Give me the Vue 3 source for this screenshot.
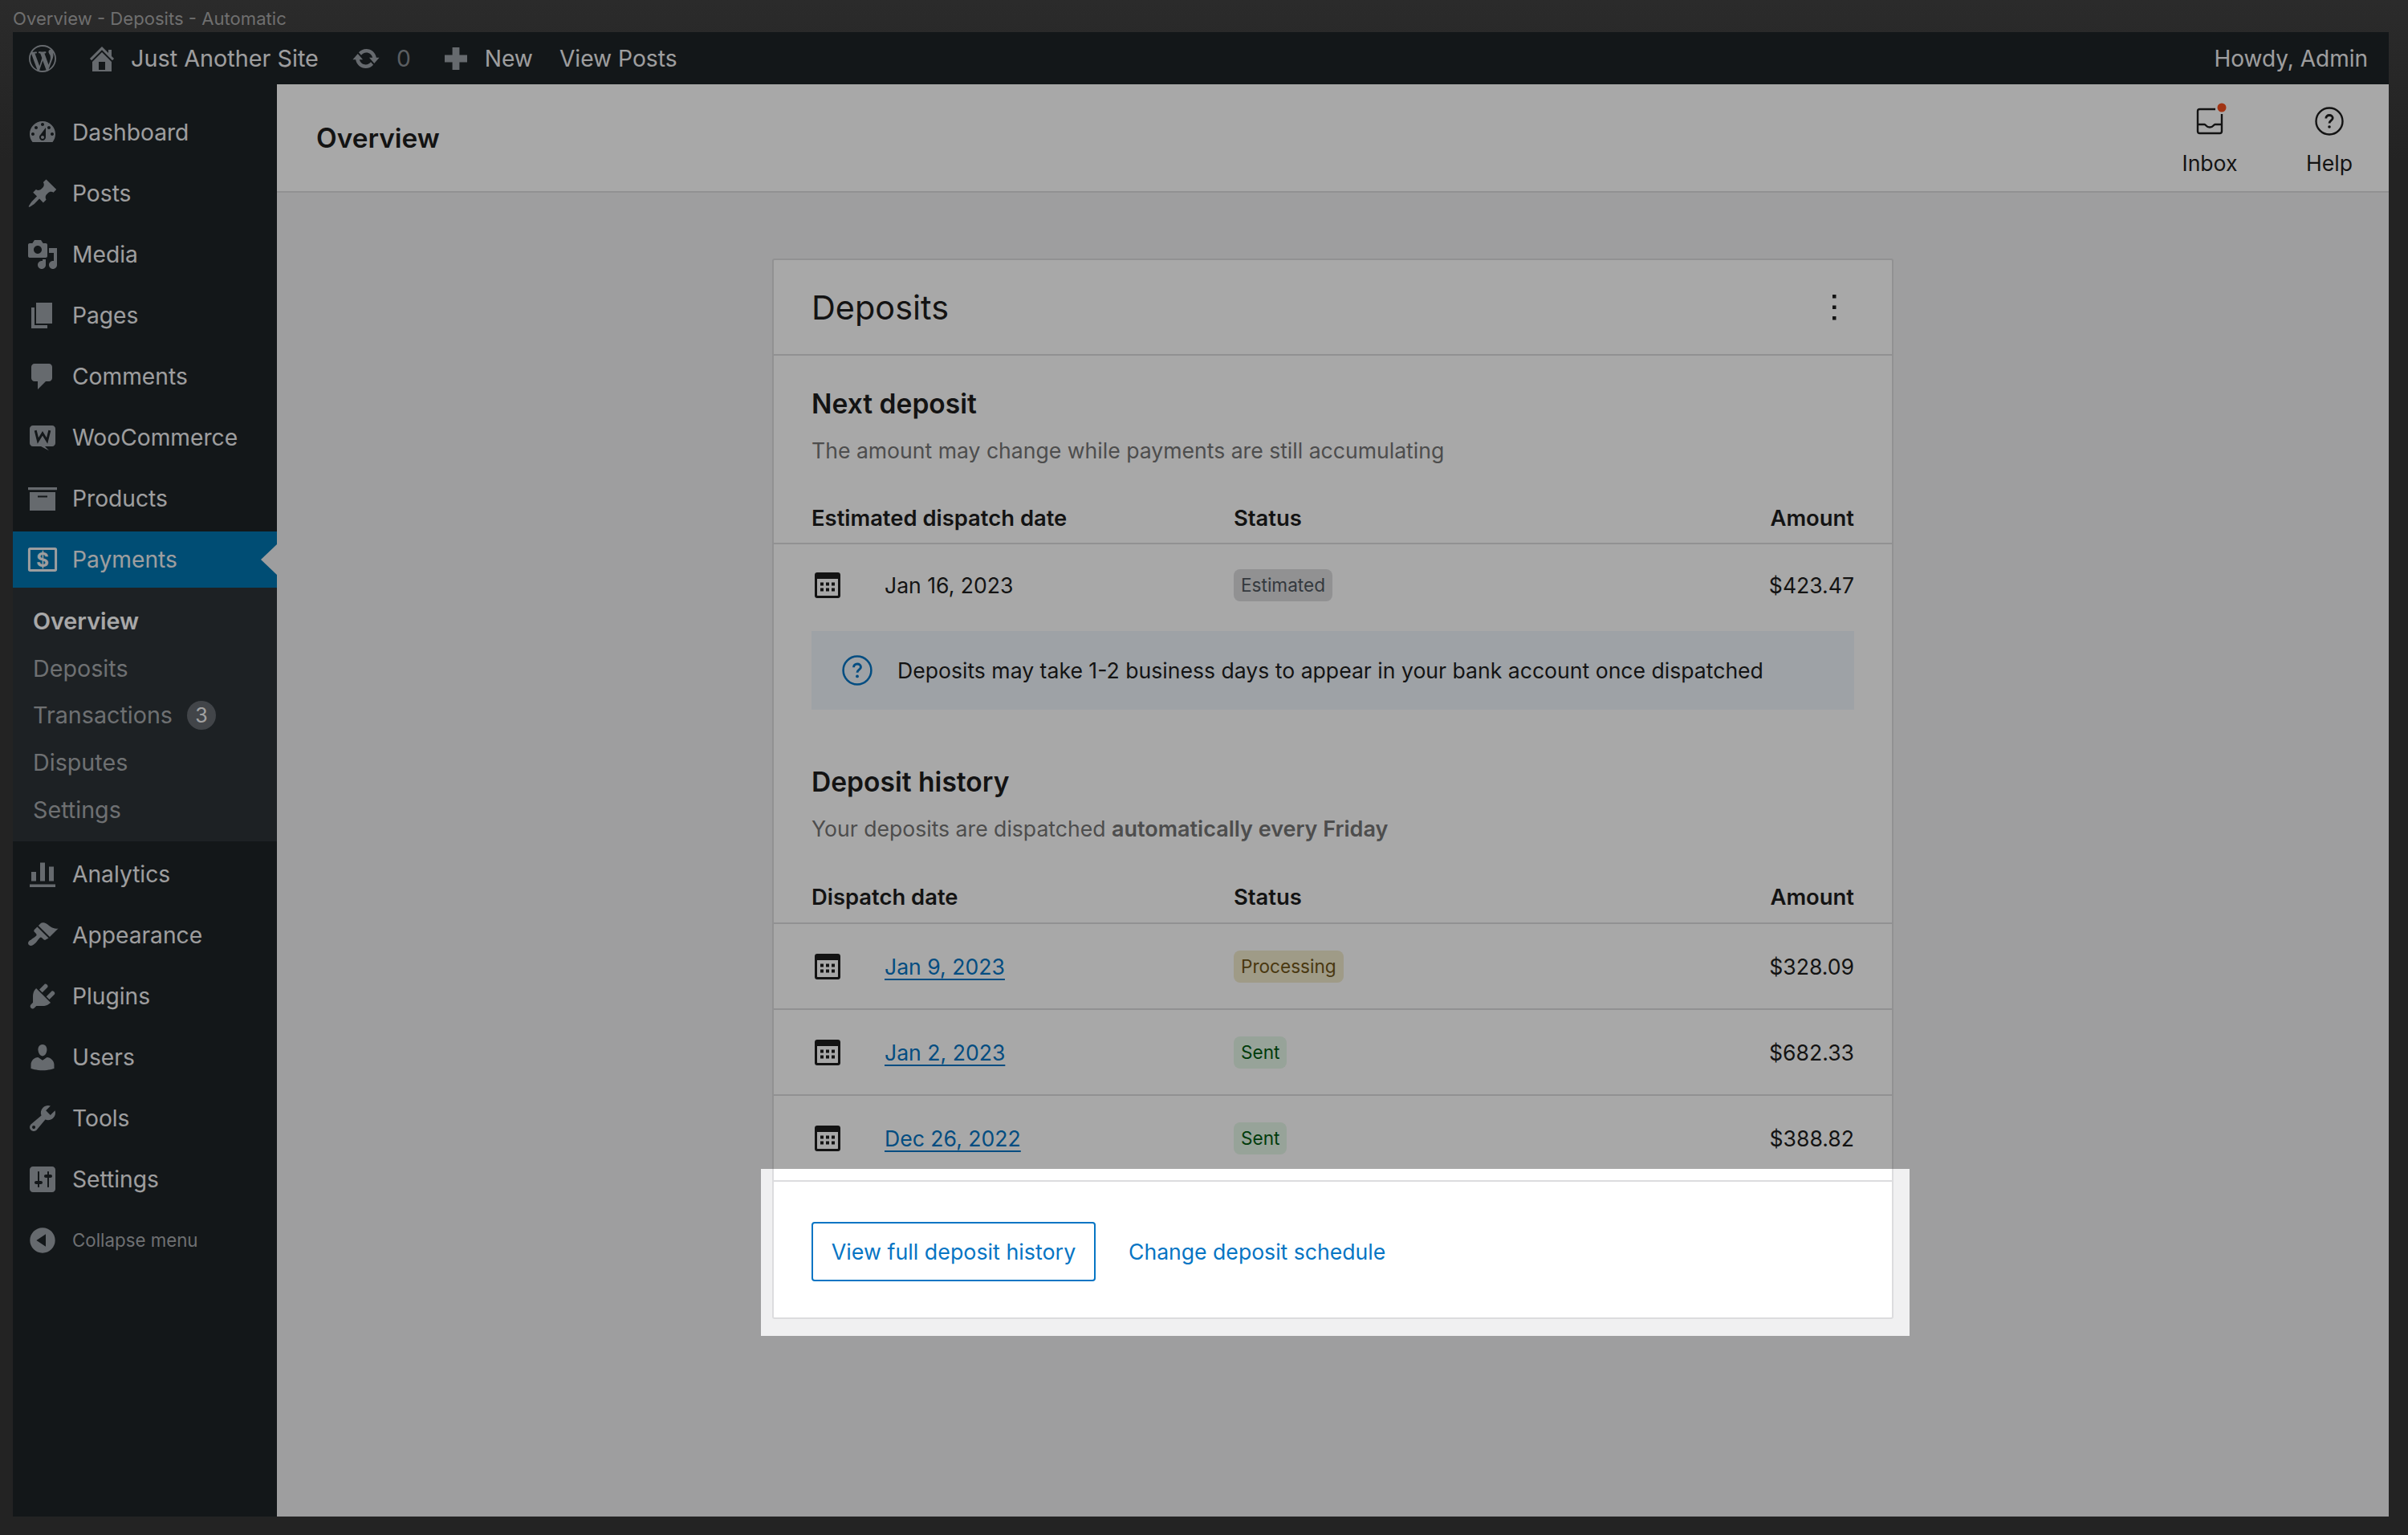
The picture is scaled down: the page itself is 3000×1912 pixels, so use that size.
<script setup>
const dash = {
  dashboard: 'M3.76 16h12.48c1.1-1.37 1.76-3.11 1.76-5 0-4.42-3.58-8-8-8s-8 3.58-8 8c0 1.89.66 3.63 1.76 5zM10 4c.55 0 1 .45 1 1s-.45 1-1 1-1-.45-1-1 .45-1 1-1zM6 6c.55 0 1 .45 1 1s-.45 1-1 1-1-.45-1-1 .45-1 1-1zm8 0c.55 0 1 .45 1 1s-.45 1-1 1-1-.45-1-1 .45-1 1-1zm-5.37 5.55L12 7v6c0 1.1-.9 2-2 2s-2-.9-2-2c0-.57.24-1.08.63-1.45zM4 10c.55 0 1 .45 1 1s-.45 1-1 1-1-.45-1-1 .45-1 1-1zm12 0c.55 0 1 .45 1 1s-.45 1-1 1-1-.45-1-1 .45-1 1-1zm-5 3c0-.55-.45-1-1-1s-1 .45-1 1 .45 1 1 1 1-.45 1-1z',
  posts: 'M10.44 3.02l1.82-1.82 6.36 6.35-1.83 1.82c-1.05-.68-2.48-.57-3.41.36l-.75.75c-.92.93-1.04 2.35-.35 3.41l-1.83 1.82-2.41-2.41-2.8 2.79c-.42.42-3.38 2.71-3.8 2.29s1.86-3.39 2.28-3.81l2.79-2.79L4.1 9.36l1.83-1.82c1.05.69 2.48.57 3.4-.36l.75-.75c.93-.92 1.05-2.35.36-3.41z',
  media: 'M13 11V4c0-.55-.45-1-1-1h-1.67L9 1H5L3.67 3H2c-.55 0-1 .45-1 1v7c0 .55.45 1 1 1h10c.55 0 1-.45 1-1zM7 4.5c1.38 0 2.5 1.12 2.5 2.5S8.38 9.5 7 9.5 4.5 8.38 4.5 7 5.62 4.5 7 4.5zM14 6h5v10.5c0 1.38-1.12 2.5-2.5 2.5S14 17.88 14 16.5s1.12-2.5 2.5-2.5c.17 0 .34.02.5.05V9h-3V6zm-4 8.05V13h2v3.5c0 1.38-1.12 2.5-2.5 2.5S7 17.88 7 16.5 8.12 14 9.5 14c.17 0 .34.02.5.05z',
  pages: 'M6 15V2h10v13H6zm-1 1h8v2H3V5h2v11z',
  comments: 'M5 2h9c1.1 0 2 .9 2 2v7c0 1.1-.9 2-2 2h-2l-5 5v-5H5c-1.1 0-2-.9-2-2V4c0-1.1.9-2 2-2z',
  woo: 'M4 2.500h12c1.100 0 2 .9 2 2v9c0 1.100-.9 2-2 2h-4.500l2.500 2.600-5-2.600H4c-1.100 0-2-.9-2-2v-9c0-1.100.9-2 2-2z',
  products: 'M1 3h18v1.600H1zM2 6h16v11.500H2zM7 8.200v1.100h6V8.200z',
  analytics: 'M3 8.500h3V14.200H3zM8.500 2.800h3v11.400h-3zM14 5.300h3v8.900h-3zM2 16.200h16V18H2z',
  appearance: 'M14.48 11.06L7.41 3.99l1.5-1.5c.5-.56 2.3-.47 3.51.32 1.21.8 1.43 1.28 2.91 2.1 1.18.64 2.45 1.26 4.45.85zm-.71.71L6.7 4.7 4.93 6.47c-.39.39-.39 1.02 0 1.41l1.06 1.06c.39.39.39 1.03 0 1.42-.6.6-1.43 1.11-2.21 1.69-.35.26-.7.53-1.01.84C1.43 13.23.4 14.91 1.53 16.05c1.14 1.13 2.81.09 4.16-1.25.31-.31.58-.66.85-1.01.57-.78 1.08-1.61 1.69-2.21.39-.39 1.02-.39 1.41 0l1.06 1.06c.39.39 1.02.39 1.41 0z',
  plugins: 'M13.11 4.36L9.87 7.6 8 5.73l3.24-3.24c.35-.34 1.05-.2 1.56.32.52.51.66 1.21.31 1.55zm-8 1.77l.91-1.12 9.01 9.01-1.19.84c-.71.71-2.63 1.16-3.82 1.16H6.14L4.9 17.26c-.59.59-1.54.59-2.12 0-.59-.58-.59-1.53 0-2.12l1.24-1.24v-3.88c0-1.13.4-3.19 1.09-3.89zm7.26 3.97l3.24-3.24c.34-.35 1.04-.21 1.55.31.52.51.66 1.21.31 1.55l-3.24 3.25z',
  users: 'M10 9.25c-2.27 0-2.73-3.44-2.73-3.44C7 4.02 7.82 2 9.97 2c2.16 0 2.98 2.02 2.71 3.81 0 0-.41 3.44-2.68 3.44zm0 2.57L12.72 10c2.39 0 4.52 2.33 4.52 4.53v2.49s-3.65 1.13-7.24 1.13c-3.65 0-7.24-1.13-7.24-1.13v-2.49c0-2.25 1.94-4.48 4.47-4.48z',
  tools: 'M16.68 9.77c-1.34 1.34-3.3 1.67-4.95.99l-5.41 6.52c-.99.99-2.59.99-3.58 0s-.99-2.59 0-3.57l6.52-5.42c-.68-1.65-.35-3.61.99-4.95 1.28-1.28 3.12-1.62 4.72-1.06l-2.89 2.89 2.82 2.82 2.86-2.87c.53 1.58.18 3.39-1.08 4.65zM3.81 16.21c.4.39 1.04.39 1.43 0 .4-.4.4-1.04 0-1.43-.39-.4-1.03-.4-1.43 0-.39.39-.39 1.03 0 1.43z',
  settings: 'M18 16V4c0-1.1-.9-2-2-2H4c-1.1 0-2 .9-2 2v12c0 1.1.9 2 2 2h12c1.1 0 2-.9 2-2zM8 11h1c.55 0 1 .45 1 1s-.45 1-1 1H8v1.5c0 .28-.22.5-.5.5s-.5-.22-.5-.5V13H6c-.55 0-1-.45-1-1s.45-1 1-1h1V5.5c0-.28.22-.5.5-.5s.5.22.5.5V11zm5-2h-1c-.55 0-1-.45-1-1s.45-1 1-1h1V5.5c0-.28.22-.5.5-.5s.5.22.5.5V7h1c.55 0 1 .45 1 1s-.45 1-1 1h-1v5.5c0 .28-.22.5-.5.5s-.5-.22-.5-.5V9z'
}
const topMenu = [
  { k: 'dashboard', t: 'Dashboard' }, { k: 'posts', t: 'Posts' }, { k: 'media', t: 'Media' },
  { k: 'pages', t: 'Pages' }, { k: 'comments', t: 'Comments' }, { k: 'woo', t: 'WooCommerce' }, { k: 'products', t: 'Products' }
]
const subMenu = [
  { t: 'Overview', cls: 'cur' }, { t: 'Deposits' }, { t: 'Transactions', n: 3 }, { t: 'Disputes' }, { t: 'Settings' }
]
const botMenu = [
  { k: 'analytics', t: 'Analytics' }, { k: 'appearance', t: 'Appearance' }, { k: 'plugins', t: 'Plugins' },
  { k: 'users', t: 'Users' }, { k: 'tools', t: 'Tools' }, { k: 'settings', t: 'Settings' }
]
const history = [
  { d: 'Jan 9, 2023', s: 'Processing', c: 'proc', a: '$328.09' },
  { d: 'Jan 2, 2023', s: 'Sent', c: 'sent', a: '$682.33' },
  { d: 'Dec 26, 2022', s: 'Sent', c: 'sent', a: '$388.82' }
]
</script>

<template>
  <div class="desktop">
    <div class="titlebar">Overview - Deposits - Automatic</div>
    <div class="window">
      <header class="adminbar">
        <svg class="ab-logo" viewBox="0 0 20 20"><path fill-rule="evenodd" d="M20 10c0-5.51-4.49-10-10-10C4.48 0 0 4.49 0 10c0 5.52 4.48 10 10 10 5.51 0 10-4.48 10-10zM7.78 15.37L4.37 6.22c.55-.02 1.17-.08 1.17-.08.5-.06.44-1.13-.06-1.11 0 0-1.45.11-2.37.11-.18 0-.37 0-.58-.01C4.12 2.69 6.87 1.11 10 1.11c2.33 0 4.45.87 6.05 2.34-.68-.11-1.65.39-1.65 1.58 0 .74.45 1.36.9 2.1.35.61.55 1.36.55 2.46 0 1.49-1.4 5-1.4 5l-3.03-8.37c.54-.02.82-.17.82-.17.5-.05.44-1.25-.06-1.22 0 0-1.44.12-2.38.12-.87 0-2.33-.12-2.33-.12-.5-.03-.56 1.2-.06 1.22l.92.08 1.26 3.41zM17.41 10c.24-.64.74-1.87.43-4.25.7 1.29 1.05 2.71 1.05 4.25 0 3.29-1.73 6.24-4.4 7.78.97-2.59 1.94-5.2 2.92-7.78zM6.1 18.09C3.12 16.65 1.11 13.53 1.11 10c0-1.3.23-2.48.72-3.59C3.25 10.3 4.67 14.2 6.1 18.09zm4.03-6.63l2.58 6.98c-.86.29-1.76.45-2.71.45-.79 0-1.57-.11-2.29-.33.81-2.38 1.62-4.74 2.42-7.1z"/></svg>
        <svg class="ab-home" viewBox="0 0 20 20"><path fill-rule="evenodd" d="M16 8.5l1.53 1.53-1.06 1.06L10 4.62l-6.47 6.47-1.06-1.06L10 2.5l4 4v-2h2v4zm-6-2.46l6 5.99V18H4v-5.97zM12 17v-5H8v5h4z"/></svg>
        <span class="ab-site">Just Another Site</span>
        <svg class="ab-update" viewBox="0 0 20 20"><path d="M10.2 3.28c3.53 0 6.43 2.61 6.92 6h2.08l-3.5 4-3.5-4h2.32c-.45-1.97-2.21-3.45-4.32-3.45-1.45 0-2.73.71-3.54 1.78L4.95 5.66C6.23 4.2 8.11 3.28 10.2 3.28zm-.4 13.44c-3.52 0-6.43-2.61-6.92-6H.8l3.5-4c1.17 1.33 2.33 2.67 3.5 4H5.48c.45 1.97 2.21 3.45 4.32 3.45 1.45 0 2.73-.71 3.54-1.78l1.71 1.95c-1.28 1.46-3.15 2.38-5.25 2.38z"/></svg>
        <span class="ab-count">0</span>
        <svg class="ab-plus" viewBox="0 0 20 20"><path d="M7.800 3h4.400v4.800H17v4.400h-4.800V17H7.800v-4.800H3V7.800h4.800z"/></svg>
        <span class="ab-new">New</span>
        <span class="ab-view">View Posts</span>
        <span class="ab-howdy">Howdy, Admin</span>
      </header>
      <div class="body">
        <nav class="side">
          <a v-for="m in topMenu" :key="m.k" class="item">
            <svg class="mi" viewBox="0 0 20 20"><path fill-rule="evenodd" :d="dash[m.k]"/>
              <polyline v-if="m.k === 'woo'" class="woo-w" points="5.600,5.600 7.200,12 10,7.400 12.800,12 14.400,5.600"/>
            </svg>
            <span>{{ m.t }}</span>
          </a>
          <a class="item active">
            <svg class="mi pay" viewBox="0 0 20 20"><rect x="1.700" y="3.300" width="16.600" height="13.400" rx=".6"/><text x="10" y="14.400" text-anchor="middle">$</text></svg>
            <span>Payments</span>
            <i class="notch"></i>
          </a>
          <div class="sub">
            <a v-for="s in subMenu" :key="s.t" class="sub-item" :class="s.cls">
              <span>{{ s.t }}</span>
              <b v-if="s.n" class="count">{{ s.n }}</b>
            </a>
          </div>
          <a v-for="m in botMenu" :key="m.k" class="item">
            <svg class="mi" viewBox="0 0 20 20"><path fill-rule="evenodd" :d="dash[m.k]"/></svg>
            <span>{{ m.t }}</span>
          </a>
          <a class="item collapse">
            <svg class="mi" viewBox="0 0 20 20"><path fill-rule="evenodd" d="M10 2.16c4.33 0 7.84 3.51 7.84 7.84s-3.51 7.84-7.84 7.84S2.16 14.33 2.16 10 5.71 2.16 10 2.16zm2 11.72V6.12L6.18 9.97z"/></svg>
            <span>Collapse menu</span>
          </a>
        </nav>
        <main class="main">
          <div class="pagehead">
            <h1>Overview</h1>
            <div class="pageact inbox">
              <svg viewBox="0 0 36 36" fill="none" stroke="#1e1e1e" stroke-width="2.400">
                <path d="M25 3H5.500C4 3 3 4 3 5.500v25C3 32 4 33 5.500 33h25c1.500 0 2.500-1 2.500-2.500V9"/>
                <path d="M3 22h8.500c1.800 0 2 3.500 6.500 3.500S22.700 22 24.500 22H33"/>
                <circle class="dot" cx="33" cy="1" r="5.500"/>
              </svg>
              <span>Inbox</span>
            </div>
            <div class="pageact help">
              <svg viewBox="0 0 36 36" fill="none" stroke="#1e1e1e" stroke-width="2.400">
                <circle cx="18" cy="18" r="16.500"/>
                <path d="M13.800 14.500c0-2.500 1.900-4 4.200-4 2.400 0 4.200 1.500 4.200 3.600 0 3.200-4.200 3-4.200 6.400" stroke-width="2.800"/>
                <circle cx="18" cy="25" r="1.800" fill="#1e1e1e" stroke="none"/>
              </svg>
              <span>Help</span>
            </div>
          </div>
          <div class="content">
            <section class="card">
              <div class="card-head">
                <h2>Deposits</h2>
                <svg class="dots" viewBox="0 0 6 36"><rect x="1" y="2" width="4.500" height="4.500"/><rect x="1" y="15.500" width="4.500" height="4.500"/><rect x="1" y="29" width="4.500" height="4.500"/></svg>
              </div>
              <h3>Next deposit</h3>
              <p class="lead">The amount may change while payments are still accumulating</p>
              <div class="thead">
                <span>Estimated dispatch date</span><span>Status</span><span class="r">Amount</span>
              </div>
              <div class="row next">
                <span class="datecell">
                  <svg class="cal" viewBox="0 0 32 32"><path fill-rule="evenodd" d="M3 0h26c1.700 0 3 1.300 3 3v26c0 1.700-1.300 3-3 3H3c-1.700 0-3-1.300-3-3V3C0 1.300 1.300 0 3 0zM3 8v20.500c0 .3.200.5.500.5h25c.3 0 .5-.2.500-.5V8z"/><path d="M7 12.500h4v4H7zM14 12.500h4v4h-4zM21 12.500h4v4h-4zM7 19.500h4v4H7zM14 19.500h4v4h-4zM21 19.500h4v4h-4z"/></svg>
                  <span>Jan 16, 2023</span>
                </span>
                <span><b class="badge est">Estimated</b></span>
                <span class="r amt">$423.47</span>
              </div>
              <div class="notice">
                <svg class="nq" viewBox="0 0 36 36" fill="none">
                  <circle cx="18" cy="18" r="16.500"/>
                  <path d="M13.800 14.500c0-2.500 1.900-4 4.200-4 2.400 0 4.200 1.500 4.200 3.600 0 3.200-4.200 3-4.200 6.400" stroke-width="2.800"/>
                  <circle class="nd" cx="18" cy="25" r="1.800"/>
                </svg>
                <span>Deposits may take 1-2 business days to appear in your bank account once dispatched</span>
              </div>
              <h3 class="h2nd">Deposit history</h3>
              <p class="lead">Your deposits are dispatched <strong>automatically every Friday</strong></p>
              <div class="thead second">
                <span>Dispatch date</span><span>Status</span><span class="r">Amount</span>
              </div>
              <div v-for="h in history" :key="h.d" class="row hist">
                <span class="datecell">
                  <svg class="cal" viewBox="0 0 32 32"><path fill-rule="evenodd" d="M3 0h26c1.700 0 3 1.300 3 3v26c0 1.700-1.300 3-3 3H3c-1.700 0-3-1.300-3-3V3C0 1.300 1.300 0 3 0zM3 8v20.500c0 .3.200.5.500.5h25c.3 0 .5-.2.500-.5V8z"/><path d="M7 12.500h4v4H7zM14 12.500h4v4h-4zM21 12.500h4v4h-4zM7 19.500h4v4H7zM14 19.500h4v4h-4zM21 19.500h4v4h-4z"/></svg>
                  <a class="dlink">{{ h.d }}</a>
                </span>
                <span><b class="badge" :class="h.c">{{ h.s }}</b></span>
                <span class="r amt">{{ h.a }}</span>
              </div>
              <div class="card-foot">
                <a class="btn">View full deposit history</a>
                <a class="flink">Change deposit schedule</a>
              </div>
            </section>
          </div>
        </main>
      </div>
      <div class="spotlight"></div>
    </div>
  </div>
</template>

<style>
html, body { margin: 0; padding: 0; background: #242424; }
</style>

<style scoped>
* { box-sizing: border-box; }
.desktop {
  width: 3000px; height: 1912px; overflow: hidden;
  background: linear-gradient(#2b2b2b, #232323 200px);
  font-family: Inter, "Noto Sans", "Liberation Sans", sans-serif;
  color: #1e1e1e;
}
.titlebar {
  height: 40px; padding: 12px 0 0 16px;
  font-size: 22.100px; line-height: 22px; color: #6f6f6f;
}
.window {
  position: relative; overflow: hidden;
  width: 2960px; height: 1849px; margin-left: 16px;
  display: flex; flex-direction: column;
}
.adminbar {
  height: 65px; flex: none; background: #1d2327; color: #f0f0f1;
  display: flex; align-items: center;
  font-size: 28.200px;
}
.adminbar svg { fill: #9ca1a7; flex: none; }
.ab-logo { width: 34px; height: 34px; margin-left: 20px; }
.ab-home { width: 40px; height: 40px; margin-left: 37px; }
.ab-site { margin-left: 16px; font-size: 28.800px; }
.ab-update { width: 36px; height: 36px; margin-left: 41px; }
.ab-count { margin-left: 20px; color: #8a8f94; }
.ab-plus { width: 40px; height: 40px; margin-left: 36px; }
.ab-new { margin-left: 16px; }
.ab-view { margin-left: 33px; }
.ab-howdy { margin-left: auto; margin-right: 26px; font-size: 28px; }

.body { flex: 1; display: flex; min-height: 0; }
.side {
  width: 329px; flex: none; background: #1d2327; color: #f0f0f1;
  padding-top: 25px; font-size: 28.200px;
}
.item {
  position: relative;
  height: 70px; display: flex; align-items: center; margin-bottom: 6px;
}
.mi { width: 40px; height: 40px; margin-left: 17px; margin-right: 17px; flex: none; fill: #9ca1a7; }
.woo-w { fill: none; stroke: #1d2327; stroke-width: 1.500; }
.item.active { background: #0076b1; margin-bottom: 0; }
.pay rect { fill: none; stroke: #f0f0f1; stroke-width: 1.500; }
.pay text { fill: #f0f0f1; font-size: 12px; font-weight: 700; font-family: Inter, sans-serif; }
.notch {
  position: absolute; right: 0; top: 16px;
  border: 19px solid transparent; border-left: 0; border-right: 20px solid #f0f0f1;
}
.sub {
  background: #2c3338; padding: 12px 0 10px; margin-bottom: 6px;
  color: #a7aaad; font-size: 28.700px;
}
.sub-item {
  height: 58.800px; display: flex; align-items: center; padding-left: 25px;
}
.sub-item.cur { color: #fff; font-weight: 600; }
.count {
  margin-left: 18px; width: 36px; height: 36px; border-radius: 50%;
  background: #646970; color: #f6f6f6; font-size: 25px; font-weight: 400;
  display: flex; align-items: center; justify-content: center;
}
.collapse { color: #a7aaad; font-size: 22.300px; }

.main { flex: 1; min-width: 0; background: #f0f0f1; }
.pagehead {
  height: 135px; background: #fff; border-bottom: 2px solid #dcdcde;
  display: flex; align-items: center; padding-left: 49px;
}
.pagehead h1 { margin: 0 auto 0 0; font-size: 33.400px; font-weight: 600; line-height: 40px; }
.pageact {
  width: 150px; padding-top: 8px; display: flex; flex-direction: column; align-items: center;
  font-size: 26.600px; line-height: 32px;
}
.pageact svg { width: 36px; height: 36px; margin-bottom: 18px; overflow: visible; }
.help { width: 148px; }
.dot { fill: #f4501f; stroke: none; }

.content { display: flex; justify-content: center; padding: 82px 0 0 0; }
.card {
  width: 1397px; height: 1321px;
  background: #fff; border: 2px solid #dcdcde; border-radius: 3px;
}
.card-head {
  height: 119px; border-bottom: 2px solid #dcdcde;
  display: flex; align-items: center; justify-content: space-between; padding: 0 69px 0 47px;
}
h2 { margin: 0; font-size: 41.400px; font-weight: 400; line-height: 48px; }
.dots { width: 6px; height: 36px; fill: #1e1e1e; }
h3 { margin: 40px 0 0; padding-left: 47px; font-size: 33.600px; font-weight: 600; line-height: 40px; }
h3.h2nd { margin-top: 70px; }
.lead { margin: 20px 0 0; padding-left: 47px; font-size: 26.600px; line-height: 36px; color: #757575; }
.lead strong { font-weight: 600; font-size: 27px; }
.thead, .row {
  display: grid; grid-template-columns: 526px 1fr auto; padding: 0 47px;
}
.thead {
  padding-top: 48px; padding-bottom: 13px; line-height: 36px; font-size: 27.400px; font-weight: 600;
  border-bottom: 2px solid #dcdcde;
}
.thead.second { padding-bottom: 14px; }
.r { text-align: right; }
.row { align-items: center; font-size: 26.600px; }
.row.next { height: 108px; padding-bottom: 6px; }
.row.hist { height: 107px; border-bottom: 2px solid #dcdcde; }
.datecell { display: flex; align-items: center; }
.cal { width: 32px; height: 32px; margin-left: 4px; margin-right: 55px; fill: #1e1e1e; flex: none; }
.amt { font-size: 26.600px; }
.dlink { color: #0675c4; text-decoration: underline; text-underline-offset: 5px; text-decoration-thickness: 2px; }
.badge {
  display: inline-block; height: 40px; line-height: 40px; padding: 0 9px; border-radius: 8px;
  font-size: 22.600px; font-weight: 400; vertical-align: middle;
}
.est { background: #dcdcde; color: #50575e; }
.proc { background: #f2ebce; color: #6f5518; }
.sent { background: #e6f7e8; color: #005c12; }
.notice {
  margin: 0 47px; height: 98px; background: #f0f6fc; display: flex; align-items: center;
  padding-left: 38px; font-size: 26.600px;
}
.nq { width: 38px; height: 38px; margin-right: 31px; stroke: #0675c4; stroke-width: 2.400; flex: none; }
.nd { fill: #0675c4; stroke: none; }
.card-foot { display: flex; align-items: center; padding: 50px 0 0 47px; font-size: 26.600px; color: #0675c4; }
.btn {
  width: 354px; height: 74px; border: 2px solid #0675c4; border-radius: 4px;
  display: flex; align-items: center; justify-content: center; font-size: 26.850px;
}
.flink { margin-left: 41px; }
.spotlight {
  position: absolute; left: 932px; top: 1416px; width: 1431px; height: 208px;
  box-shadow: 0 0 0 4000px rgba(0,0,0,.34);
  pointer-events: none;
}
</style>
